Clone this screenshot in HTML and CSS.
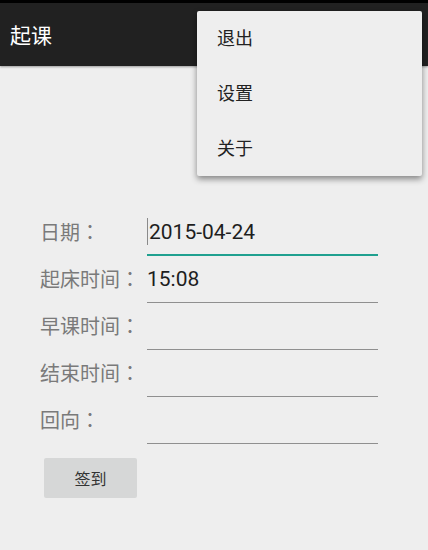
FILE: index.html
```html
<!DOCTYPE html>
<html lang="zh-CN">
<head>
    <meta charset="UTF-8">
    <meta name="viewport" content="width=device-width, initial-scale=1.0">
    <title>起课</title>
    <link rel="stylesheet" href="styles.css">
</head>
<body>
    <div class="status-strip"></div>
    <header class="app-bar">
        <h1 class="app-title">起课</h1>
    </header>

    <ul class="overflow-menu">
        <li>退出</li>
        <li>设置</li>
        <li>关于</li>
    </ul>

    <form class="sign-form">
        <div class="form-row">
            <label class="row-label">日期：</label>
            <div class="row-field focused"><span class="cursor"></span>2015-04-24</div>
        </div>
        <div class="form-row">
            <label class="row-label">起床时间：</label>
            <div class="row-field">15:08</div>
        </div>
        <div class="form-row">
            <label class="row-label">早课时间：</label>
            <div class="row-field"></div>
        </div>
        <div class="form-row">
            <label class="row-label">结束时间：</label>
            <div class="row-field"></div>
        </div>
        <div class="form-row">
            <label class="row-label">回向：</label>
            <div class="row-field"></div>
        </div>
        <button type="button" class="sign-button">签到</button>
    </form>
</body>
</html>
```

FILE: styles.css
```css
body {
    margin: 0;
    padding: 0;
    background-color: #eeeeee;
    font-family: Roboto, "Noto Sans CJK SC", sans-serif;
}

.status-strip {
    height: 3px;
    background-color: #000;
}

.app-bar {
    height: 63px;
    background-color: #212121;
    box-shadow: 0 1px 2px rgba(0, 0, 0, 0.35);
    display: flex;
    align-items: center;
}

.app-title {
    margin: 0 0 0 10px;
    padding-bottom: 2px;
    font-size: 21px;
    font-weight: normal;
    color: #fff;
}

.overflow-menu {
    position: absolute;
    top: 11px;
    left: 197px;
    width: 225px;
    margin: 0;
    padding: 0;
    list-style: none;
    background-color: #eeeeee;
    border-radius: 2px;
    box-shadow: 0 3px 6px rgba(0, 0, 0, 0.45);
}

.overflow-menu li {
    height: 55px;
    line-height: 55px;
    padding-left: 20px;
    font-size: 18px;
    color: #222;
}

.sign-form {
    margin-top: 143px;
    padding-left: 40px;
}

.form-row {
    display: flex;
    height: 47px;
}

.row-label {
    width: 107px;
    display: flex;
    align-items: center;
    padding-bottom: 3px;
    font-family: "Noto Sans CJK TC", sans-serif;
    font-feature-settings: "locl" 0;
    text-spacing-trim: space-all;
    font-size: 20px;
    color: #7a7a7a;
}

.row-field {
    width: 231px;
    box-sizing: border-box;
    display: flex;
    align-items: center;
    padding-bottom: 1px;
    border-bottom: 1px solid #8f8f8f;
    font-size: 21px;
    color: #1e1e1e;
}

.row-field.focused {
    border-bottom: 2px solid #1fa08f;
    padding-bottom: 0;
}

.cursor {
    display: inline-block;
    width: 1px;
    height: 27px;
    margin-right: 1px;
    background-color: #8a8a8a;
}

.sign-button {
    margin: 14px 0 0 4px;
    width: 93px;
    height: 40px;
    border: none;
    border-radius: 2px;
    background-color: #d6d7d7;
    font-family: Roboto, "Noto Sans CJK SC", sans-serif;
    font-size: 16px;
    color: #333;
}
```
